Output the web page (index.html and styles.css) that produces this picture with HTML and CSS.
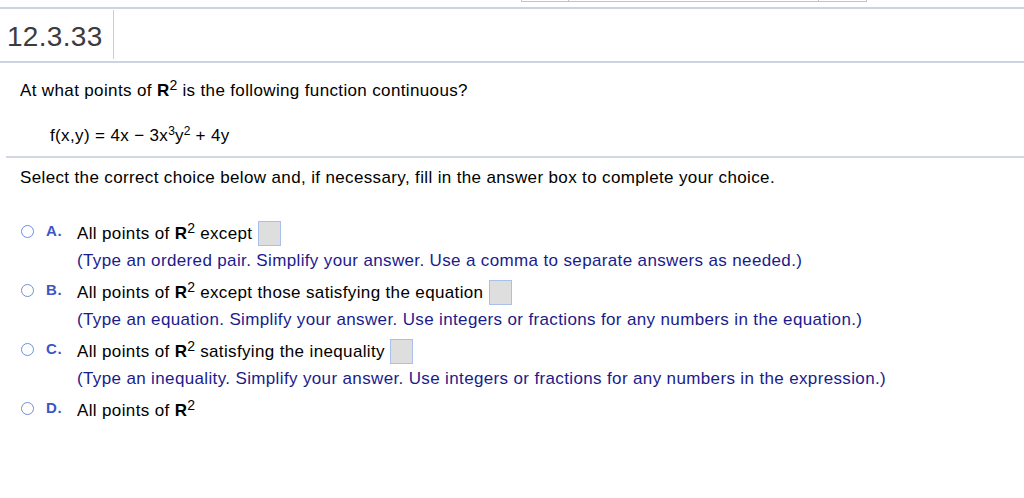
FILE: index.html
```html
<!DOCTYPE html>
<html>
<head>
<meta charset="utf-8">
<link rel="stylesheet" href="styles.css">
</head>
<body>
<div class="toolbar"><div class="toolbox"><span class="seg s1"></span><span class="seg s2"></span><span class="seg s3"></span></div></div>
<div class="titlebar"><div class="qnum">12.3.33</div></div>
<div class="question">
  <p class="prompt">At what points of <b>R</b><sup>2</sup> is the following function continuous?</p>
  <p class="func">f(x,y) = 4x − 3x<sup>3</sup>y<sup>2</sup> + 4y</p>
</div>
<div class="answers">
  <p class="instr">Select the correct choice below and, if necessary, fill in the answer box to complete your choice.</p>
  <div class="choices">
    <div class="choice">
      <span class="radio"></span><span class="letter">A.</span>
      <div class="body">
        <div class="main">All points of <b>R</b><sup>2</sup> except <span class="box"></span></div>
        <div class="hint">(Type an ordered pair. Simplify your answer. Use a comma to separate answers as needed.)</div>
      </div>
    </div>
    <div class="choice">
      <span class="radio"></span><span class="letter">B.</span>
      <div class="body">
        <div class="main">All points of <b>R</b><sup>2</sup> except those satisfying the equation <span class="box"></span></div>
        <div class="hint">(Type an equation. Simplify your answer. Use integers or fractions for any numbers in the equation.)</div>
      </div>
    </div>
    <div class="choice">
      <span class="radio"></span><span class="letter">C.</span>
      <div class="body">
        <div class="main">All points of <b>R</b><sup>2</sup> satisfying the inequality <span class="box"></span></div>
        <div class="hint">(Type an inequality. Simplify your answer. Use integers or fractions for any numbers in the expression.)</div>
      </div>
    </div>
    <div class="choice">
      <span class="radio"></span><span class="letter">D.</span>
      <div class="body">
        <div class="main">All points of <b>R</b><sup>2</sup></div>
      </div>
    </div>
  </div>
</div>
</body>
</html>
```

FILE: styles.css
```css
html, body {
  margin: 0;
  padding: 0;
  background: #ffffff;
}
body {
  font-family: "Liberation Sans", Arial, Helvetica, sans-serif;
  color: #000;
  width: 1024px;
  height: 498px;
  overflow: hidden;
}
p { margin: 0; }
sup {
  font-size: 14px;
  line-height: 0;
  vertical-align: 6px;
  letter-spacing: 0;
}
.toolbar {
  height: 7px;
  display: flex;
  align-items: flex-start;
}
.toolbox {
  margin-left: 521px;
  width: 344px;
  height: 1px;
  border: 1px solid #c4c4c4;
  border-top: none;
  display: flex;
}
.seg { display: block; height: 2px; }
.s1 { width: 46px; border-right: 1px solid #c4c4c4; }
.s2 { width: 249px; border-right: 1px solid #c4c4c4; }
.s3 { flex: 1; }
.titlebar {
  border-top: 2px solid #cdd3e2;
  border-bottom: 2px solid #cdd3e2;
  height: 52px;
  display: flex;
  align-items: flex-start;
}
.qnum {
  margin-top: 1px;
  height: 49px;
  width: 106px;
  padding-left: 7px;
  border-right: 1px solid #c9cdd6;
  font-size: 28px;
  line-height: 54px;
  color: #3c3c3c;
  letter-spacing: 0.3px;
  overflow: hidden;
}
.question {
  margin-left: 6px;
  padding: 18px 0 10px 14px;
  border-bottom: 2px solid #d3d8e0;
}
.prompt, .func, .instr, .main, .hint {
  font-size: 17px;
  letter-spacing: 0.36px;
}
.prompt { line-height: 20px; }
.func {
  margin-top: 25px;
  padding-left: 30px;
  line-height: 20px;
}
.func sup { font-size: 12px; vertical-align: 6px; }
.answers {
  padding: 10px 0 0 20px;
}
.instr { line-height: 20px; }
.choices {
  margin-top: 36px;
  display: flex;
  flex-direction: column;
  gap: 12px;
}
.choice {
  display: flex;
  align-items: flex-start;
}
.radio {
  margin-top: 1px;
  margin-left: 1px;
  width: 11px;
  height: 11px;
  border: 1.6px solid #6f8fdb;
  border-radius: 50%;
  flex: none;
}
.letter {
  width: 43px;
  padding-left: 12px;
  box-sizing: border-box;
  margin-top: -1px;
  font-weight: bold;
  font-size: 15px;
  letter-spacing: 0.6px;
  line-height: 16px;
  color: #3a57c4;
  flex: none;
}
.body {
  display: flex;
  flex-direction: column;
}
.main {
  line-height: 20px;
  height: 20px;
  white-space: pre;
}
.box {
  display: inline-block;
  width: 21px;
  height: 23px;
  margin-top: -6px;
  border: 1px solid #a9c0ea;
  background: #dedede;
  vertical-align: -7px;
}
.hint {
  margin-top: 7px;
  line-height: 20px;
  color: #1b1b8c;
}
```
